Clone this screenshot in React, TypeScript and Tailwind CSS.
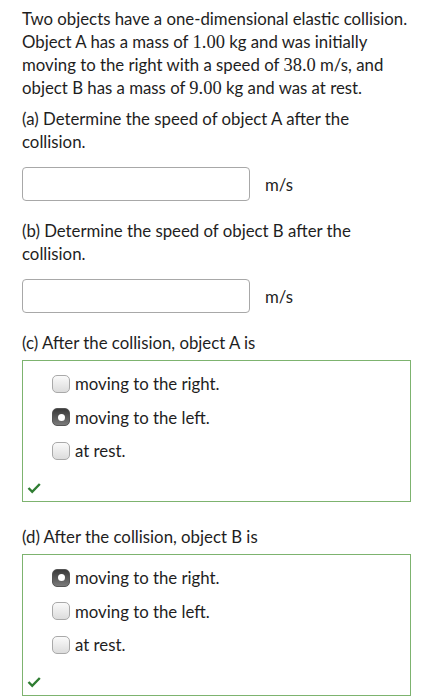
import React from "react";

const serif = "font-['Liberation_Serif',serif] text-[18.5px] leading-[0]";

function Radio({ checked }: { checked?: boolean }) {
  if (checked) {
    return (
      <span className="inline-flex w-[18px] h-[18px] rounded-[5px] bg-gradient-to-b from-[#3a3a3a] to-[#7a7a7a] border border-[#555] items-center justify-center shrink-0">
        <span className="w-[7px] h-[7px] rounded-full bg-white" />
      </span>
    );
  }
  return (
    <span className="inline-block w-[18px] h-[18px] rounded-[5px] bg-gradient-to-b from-[#fafafa] to-[#dcdcdc] border border-[#a9a9a9] shrink-0" />
  );
}

function Check() {
  return (
    <svg width="14" height="12" viewBox="0 0 14 12">
      <path d="M1.5 6 L5.2 9.8 L12.8 2" fill="none" stroke="#2f7d32" strokeWidth="2.4" />
    </svg>
  );
}

function Choice({ options, selected }: { options: string[]; selected: number }) {
  return (
    <div className="border border-[#7db36f] mr-[20px] pt-[13px] pb-[7px] pl-[4px]">
      <div className="flex flex-col gap-[14.5px] pl-[25px]">
        {options.map((o, i) => (
          <div key={i} className="flex items-center gap-[5px] h-[19px]">
            <Radio checked={i === selected} />
            <span>{o}</span>
          </div>
        ))}
      </div>
      <div className="mt-[22px] h-[12px] flex">
        <Check />
      </div>
    </div>
  );
}

function Answer() {
  return (
    <div className="flex items-center mt-[14px] mb-[18px]">
      <div className="w-[228px] h-[34px] border border-[#a8a8a8] rounded-[4px]" />
      <span className="ml-[15px]">m/s</span>
    </div>
  );
}

export default function App() {
  return (
    <div className="w-[431px] h-[700px] bg-white text-[#1e1e1e] font-['Lato',sans-serif] text-[16.8px] leading-[23px] pl-[22px] pt-[7px] overflow-hidden">
      <p className="pr-[15px]">
        Two objects have a one-dimensional elastic collision. Object A has a mass of{" "}
        <span className={serif}>1.00</span> kg and was initially moving to the right with a speed of{" "}
        <span className={serif}>38.0</span> m/s, and object B has a mass of{" "}
        <span className={serif}>9.00</span> kg and was at rest.
      </p>
      <p className="mt-[8px] pr-[50px]">(a) Determine the speed of object A after the collision.</p>
      <Answer />
      <p className="pr-[50px]">(b) Determine the speed of object B after the collision.</p>
      <Answer />
      <p className="mb-[6px]">(c) After the collision, object A is</p>
      <Choice options={["moving to the right.", "moving to the left.", "at rest."]} selected={1} />
      <p className="mt-[23px] mb-[6px]">(d) After the collision, object B is</p>
      <Choice options={["moving to the right.", "moving to the left.", "at rest."]} selected={0} />
    </div>
  );
}
